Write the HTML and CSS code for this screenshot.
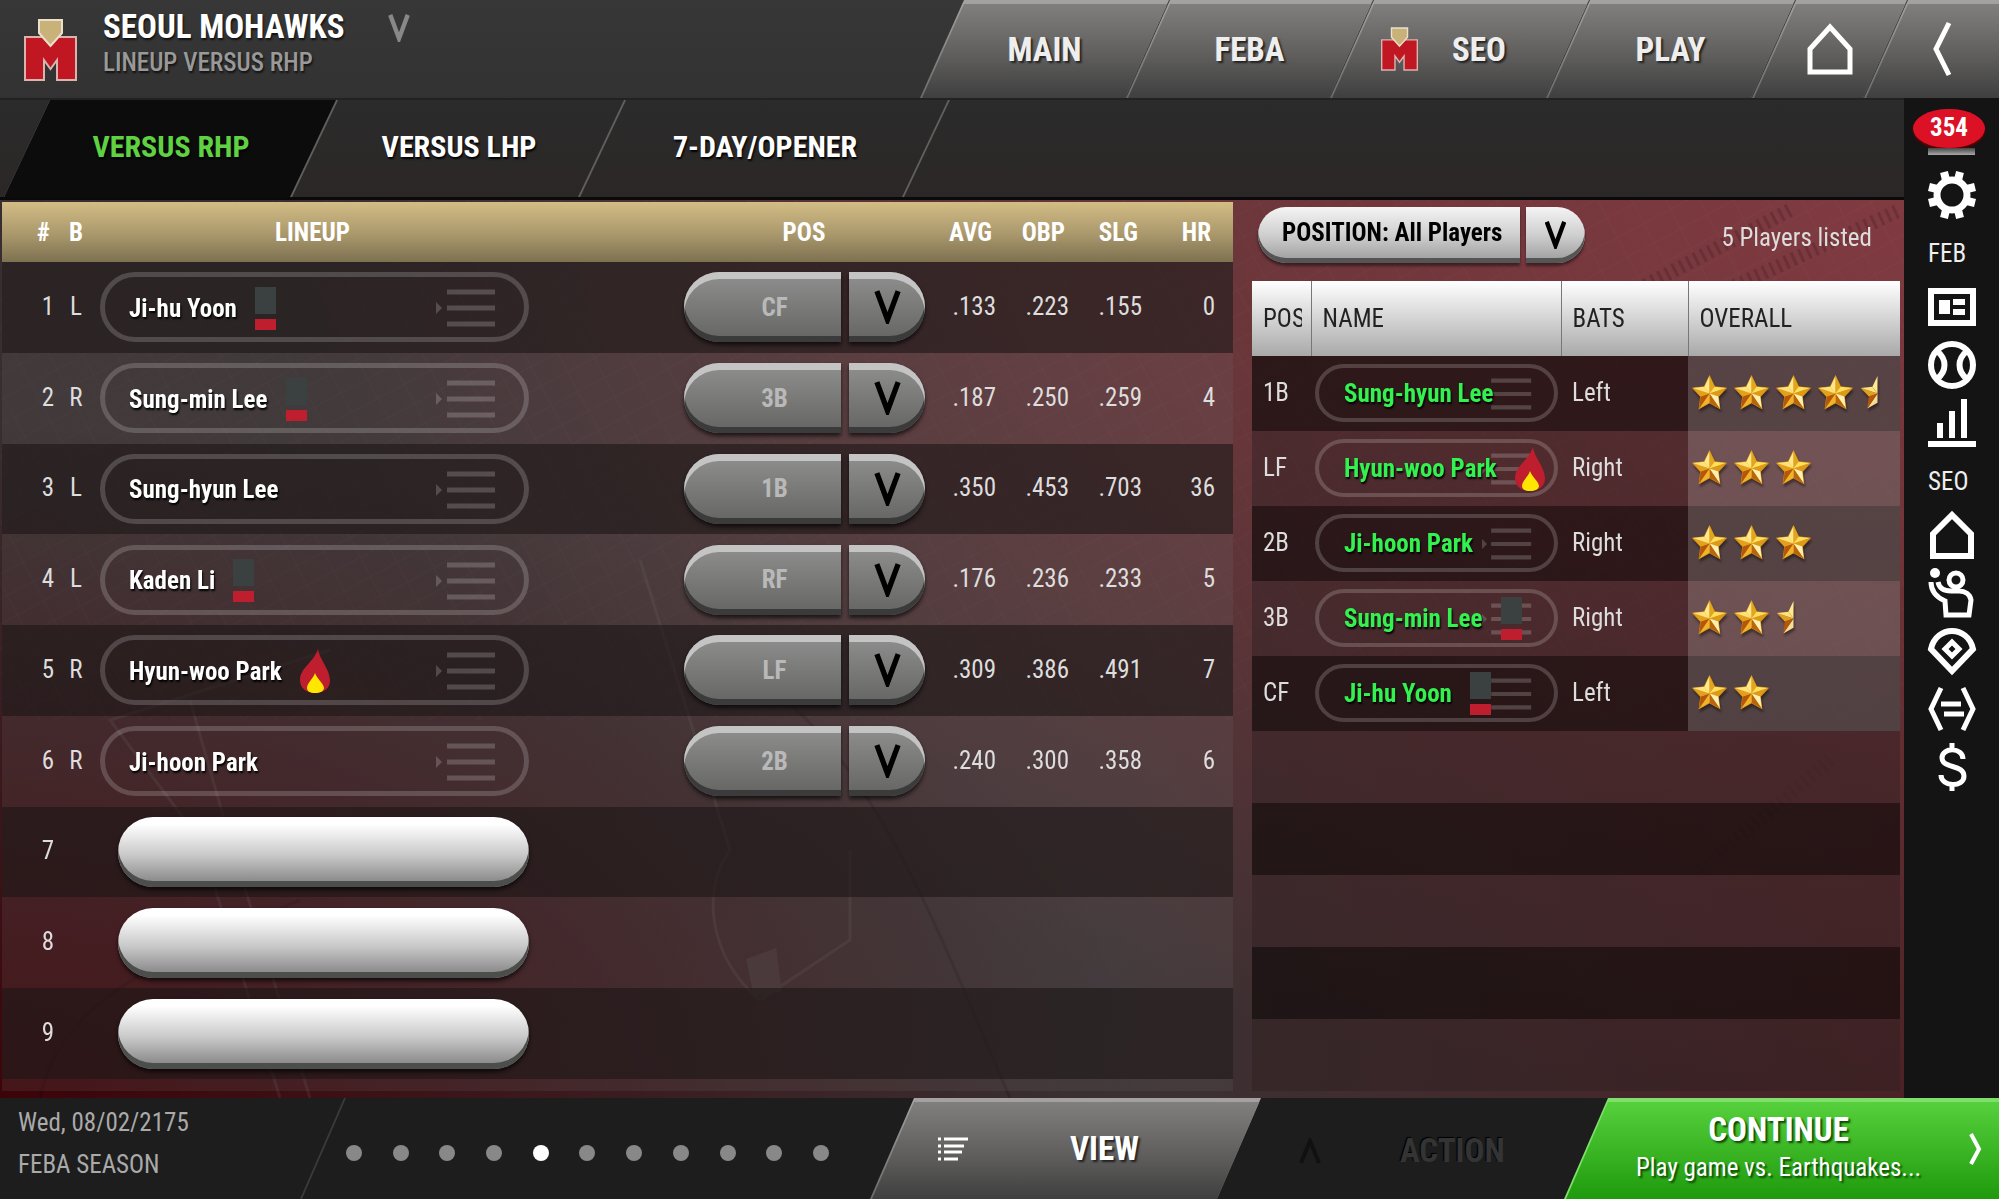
FILE: index.html
```html
<!DOCTYPE html>
<html lang="en">
<head>
<meta charset="UTF-8">
<title>Seoul Mohawks - Lineup versus RHP</title>
<link rel="stylesheet" href="styles.css">
</head>
<body>

<!-- shared icons -->
<svg class="symbols" aria-hidden="true">
  <symbol id="logo" viewBox="0 0 53 62">
    <path d="M1 18H52V61H33V41L26.500 50L20 41V61H1Z" fill="#c01722" stroke="#d9b3ae" stroke-width="2"/>
    <path d="M15 1H38V14L26.500 27L15 14Z" fill="#c9b27a" stroke="#eadfca" stroke-width="2"/>
  </symbol>
  <symbol id="chevron" viewBox="0 0 24 32">
    <path d="M2 1L12 28L22 1" fill="none" stroke="currentColor" stroke-width="5"/>
  </symbol>
  <symbol id="drag" viewBox="0 0 60 38">
    <path d="M0 13L6 19L0 25Z" fill="currentColor"/>
    <path d="M11 3H59M11 19H59M11 35H59" stroke="currentColor" stroke-width="5"/>
  </symbol>
  <symbol id="cold" viewBox="0 0 21 43">
    <rect width="21" height="27" fill="#3b4140"/>
    <rect y="32" width="21" height="11" fill="#be1e2d"/>
  </symbol>
  <symbol id="fire" viewBox="0 0 30 44">
    <path d="M18 0C19 10 30 20 30 32C30 39 24 44 15 44C6 44 0 39 0 31C0 19 14 13 18 0Z" fill="#be1e2d"/>
    <path d="M15 24C17 30 24 35 24 39C24 42 20 44 15 44C10 44 7 42 7 39C7 34 13 30 15 24Z" fill="#ffe600"/>
  </symbol>
  <symbol id="star" viewBox="0 0 34 34">
    <path d="M17 1L22 11.500L33.200 12.700L25.500 21L27 32.500L17 27L7 32.500L8.500 21L0.800 12.700L12 11.500Z" fill="#e0a01c" stroke="#c98a18" stroke-width="1"/>
    <path d="M17 18L17 1L12 11.500Z" fill="#ffe98a"/>
    <path d="M17 18L17 1L22 11.500Z" fill="#e3a51e"/>
    <path d="M17 18L33.200 12.700L22 11.500Z" fill="#ffdf5c"/>
    <path d="M17 18L33.200 12.700L25.500 21Z" fill="#dc9a18"/>
    <path d="M17 18L27 32.500L25.500 21Z" fill="#fff0b0"/>
    <path d="M17 18L27 32.500L17 27Z" fill="#b9640e"/>
    <path d="M17 18L7 32.500L17 27Z" fill="#f0b42a"/>
    <path d="M17 18L7 32.500L8.500 21Z" fill="#b5560b"/>
    <path d="M17 18L0.800 12.700L8.500 21Z" fill="#e2a01c"/>
    <path d="M17 18L0.800 12.700L12 11.500Z" fill="#ffe27a"/>
  </symbol>
  <symbol id="half-star" viewBox="0 0 34 34">
    <path d="M17 18L17 1L12 11.500Z" fill="#ffe98a"/>
    <path d="M17 18V27L7 32.500Z" fill="#f7dc96"/>
    <path d="M17 18L7 32.500L8.500 21Z" fill="#b5560b"/>
    <path d="M17 18L0.800 12.700L8.500 21Z" fill="#e2a01c"/>
    <path d="M17 18L0.800 12.700L12 11.500Z" fill="#ffe27a"/>
  </symbol>
</svg>

<div class="app">

  <header class="topbar">
    <svg class="team-logo"><use href="#logo"/></svg>
    <div class="team">
      <h1>SEOUL MOHAWKS</h1>
      <p>LINEUP VERSUS RHP</p>
    </div>
    <button class="team-switch" aria-label="Change page"><svg><use href="#chevron"/></svg></button>
    <nav class="main-nav">
      <a href="#main" class="slant">MAIN</a>
      <a href="#feba" class="slant nav-feba">FEBA</a>
      <a href="#seo" class="slant nav-team"><svg class="nav-logo"><use href="#logo"/></svg>SEO</a>
      <a href="#play" class="slant">PLAY</a>
      <a href="#home" class="slant nav-home" aria-label="Home">
        <svg width="46" height="54" viewBox="0 0 46 54" fill="none" stroke="#fff" stroke-width="5"><path d="M3 50V27L23 5L43 27V50Z"/></svg>
      </a>
      <a href="#back" class="slant nav-back" aria-label="Back">
        <svg width="20" height="56" viewBox="0 0 20 56" fill="none" stroke="#fff" stroke-width="5"><path d="M17 2L4 28L17 54"/></svg>
      </a>
    </nav>
  </header>

  <nav class="tabs">
    <a href="#rhp" class="tab active">VERSUS RHP</a>
    <a href="#lhp" class="tab">VERSUS LHP</a>
    <a href="#opener" class="tab wide">7-DAY/OPENER</a>
  </nav>

  <main class="content">
    <svg class="backdrop" viewBox="0 0 1904 898" preserveAspectRatio="none" aria-hidden="true">
      <defs>
        <pattern id="mesh" width="30" height="22" patternUnits="userSpaceOnUse" patternTransform="rotate(-28)">
          <path d="M0 0H30M0 0V22" stroke="#fff" fill="none"/>
        </pattern>
      </defs>
      <rect width="1904" height="520" fill="url(#mesh)" opacity=".04"/>
      <g fill="none" stroke="#777" stroke-width="3" opacity=".15">
        <path d="M640 360L690 520L730 650C700 690 710 760 760 800L850 740V650"/>
        <path d="M280 898L200 640L110 520L330 450"/>
        <path d="M310 898L230 640L190 500"/>
        <path d="M748 760L775 750L780 790L755 795Z" fill="#777"/>
        <path d="M700 450C860 500 940 740 1010 898" stroke="#000"/>
        <path d="M40 898C60 800 160 760 300 700" stroke="#000"/>
      </g>
      <g fill="none" stroke="#411c20" stroke-width="14" stroke-dasharray="3 5" opacity=".3">
        <path d="M1640 130L1900 10"/>
        <path d="M1560 130L1790 10"/>
        <path d="M1700 670L1830 560" opacity=".6"/>
      </g>
    </svg>

    <section class="lineup">
      <table class="lineup-table">
        <colgroup>
          <col class="col-num"><col class="col-bats"><col><col class="col-pos">
          <col class="col-avg"><col class="col-stat"><col class="col-stat"><col class="col-hr">
        </colgroup>
        <thead>
          <tr><th>#</th><th>B</th><th><div class="lineup-title">LINEUP</div></th><th>POS</th><th>AVG</th><th>OBP</th><th>SLG</th><th>HR</th></tr>
        </thead>
        <tbody>
          <tr>
            <td>1</td><td>L</td>
            <td><button class="slot"><span>Ji-hu Yoon</span><svg class="cold"><use href="#cold"/></svg><svg class="drag"><use href="#drag"/></svg></button></td>
            <td><div class="picker"><select aria-label="Position of Ji-hu Yoon"><option>CF</option></select><button aria-label="Open positions"><svg><use href="#chevron"/></svg></button></div></td>
            <td>.133</td><td>.223</td><td>.155</td><td>0</td>
          </tr>
          <tr>
            <td>2</td><td>R</td>
            <td><button class="slot"><span>Sung-min Lee</span><svg class="cold"><use href="#cold"/></svg><svg class="drag"><use href="#drag"/></svg></button></td>
            <td><div class="picker"><select aria-label="Position of Sung-min Lee"><option>3B</option></select><button aria-label="Open positions"><svg><use href="#chevron"/></svg></button></div></td>
            <td>.187</td><td>.250</td><td>.259</td><td>4</td>
          </tr>
          <tr>
            <td>3</td><td>L</td>
            <td><button class="slot"><span>Sung-hyun Lee</span><svg class="drag"><use href="#drag"/></svg></button></td>
            <td><div class="picker"><select aria-label="Position of Sung-hyun Lee"><option>1B</option></select><button aria-label="Open positions"><svg><use href="#chevron"/></svg></button></div></td>
            <td>.350</td><td>.453</td><td>.703</td><td>36</td>
          </tr>
          <tr>
            <td>4</td><td>L</td>
            <td><button class="slot"><span>Kaden Li</span><svg class="cold"><use href="#cold"/></svg><svg class="drag"><use href="#drag"/></svg></button></td>
            <td><div class="picker"><select aria-label="Position of Kaden Li"><option>RF</option></select><button aria-label="Open positions"><svg><use href="#chevron"/></svg></button></div></td>
            <td>.176</td><td>.236</td><td>.233</td><td>5</td>
          </tr>
          <tr>
            <td>5</td><td>R</td>
            <td><button class="slot"><span>Hyun-woo Park</span><svg class="fire"><use href="#fire"/></svg><svg class="drag"><use href="#drag"/></svg></button></td>
            <td><div class="picker"><select aria-label="Position of Hyun-woo Park"><option>LF</option></select><button aria-label="Open positions"><svg><use href="#chevron"/></svg></button></div></td>
            <td>.309</td><td>.386</td><td>.491</td><td>7</td>
          </tr>
          <tr>
            <td>6</td><td>R</td>
            <td><button class="slot"><span>Ji-hoon Park</span><svg class="drag"><use href="#drag"/></svg></button></td>
            <td><div class="picker"><select aria-label="Position of Ji-hoon Park"><option>2B</option></select><button aria-label="Open positions"><svg><use href="#chevron"/></svg></button></div></td>
            <td>.240</td><td>.300</td><td>.358</td><td>6</td>
          </tr>
          <tr><td>7</td><td></td><td><button class="slot-empty" aria-label="Empty slot 7"></button></td><td></td><td></td><td></td><td></td><td></td></tr>
          <tr><td>8</td><td></td><td><button class="slot-empty" aria-label="Empty slot 8"></button></td><td></td><td></td><td></td><td></td><td></td></tr>
          <tr><td>9</td><td></td><td><button class="slot-empty" aria-label="Empty slot 9"></button></td><td></td><td></td><td></td><td></td><td></td></tr>
        </tbody>
      </table>
      <div class="lineup-end"></div>
    </section>

    <section class="roster">
      <div class="toolbar">
        <div class="filter">
          <select aria-label="Position filter"><option>POSITION: All Players</option></select>
          <button aria-label="Open filter"><svg><use href="#chevron"/></svg></button>
        </div>
        <span class="count">5 Players listed</span>
      </div>
      <table class="roster-table">
        <colgroup><col class="col-rpos"><col class="col-name"><col class="col-rbats"><col></colgroup>
        <thead>
          <tr><th><div class="clip">POS</div></th><th>NAME</th><th>BATS</th><th>OVERALL</th></tr>
        </thead>
        <tbody>
          <tr class="player">
            <td>1B</td>
            <td><button class="slot small"><svg class="drag"><use href="#drag"/></svg><span>Sung-hyun Lee</span></button></td>
            <td>Left</td>
            <td><div class="stars"><svg><use href="#star"/></svg><svg><use href="#star"/></svg><svg><use href="#star"/></svg><svg><use href="#star"/></svg><svg><use href="#half-star"/></svg></div></td>
          </tr>
          <tr class="player">
            <td>LF</td>
            <td><button class="slot small"><svg class="drag"><use href="#drag"/></svg><span>Hyun-woo Park</span><svg class="fire"><use href="#fire"/></svg></button></td>
            <td>Right</td>
            <td><div class="stars"><svg><use href="#star"/></svg><svg><use href="#star"/></svg><svg><use href="#star"/></svg></div></td>
          </tr>
          <tr class="player">
            <td>2B</td>
            <td><button class="slot small"><svg class="drag"><use href="#drag"/></svg><span>Ji-hoon Park</span></button></td>
            <td>Right</td>
            <td><div class="stars"><svg><use href="#star"/></svg><svg><use href="#star"/></svg><svg><use href="#star"/></svg></div></td>
          </tr>
          <tr class="player">
            <td>3B</td>
            <td><button class="slot small"><svg class="drag"><use href="#drag"/></svg><span>Sung-min Lee</span><svg class="cold"><use href="#cold"/></svg></button></td>
            <td>Right</td>
            <td><div class="stars"><svg><use href="#star"/></svg><svg><use href="#star"/></svg><svg><use href="#half-star"/></svg></div></td>
          </tr>
          <tr class="player">
            <td>CF</td>
            <td><button class="slot small"><svg class="drag"><use href="#drag"/></svg><span>Ji-hu Yoon</span><svg class="cold"><use href="#cold"/></svg></button></td>
            <td>Left</td>
            <td><div class="stars"><svg><use href="#star"/></svg><svg><use href="#star"/></svg></div></td>
          </tr>
          <tr class="blank"><td colspan="4"></td></tr>
          <tr class="blank"><td colspan="4"></td></tr>
          <tr class="blank"><td colspan="4"></td></tr>
          <tr class="blank"><td colspan="4"></td></tr>
          <tr class="blank"><td colspan="4"></td></tr>
        </tbody>
      </table>
    </section>
  </main>

  <aside class="sidebar">
    <a href="#inbox" class="inbox"><span class="badge">354</span></a>
    <a href="#settings" aria-label="Settings">
      <svg viewBox="0 0 48 48"><circle cx="24" cy="24" r="15" stroke-width="7"/><g stroke-width="8"><path d="M16 1L18 9M32 1L30 9M16 47L18 39M32 47L30 39M1 16L9 18M1 32L9 30M47 16L39 18M47 32L39 30"/></g></svg>
    </a>
    <span class="side-label">FEB</span>
    <a href="#news" aria-label="News">
      <svg viewBox="0 0 48 48"><path d="M3 8H45V40H3Z"/><path d="M11 17H22V31H11Z" fill="#fff" stroke="none"/><path d="M25 19H37M25 29H37"/></svg>
    </a>
    <a href="#scores" aria-label="Scores">
      <svg viewBox="0 0 48 48"><circle cx="24" cy="24" r="21"/><path d="M9 10C19 18 19 30 9 38M39 10C29 18 29 30 39 38"/></svg>
    </a>
    <a href="#stats" aria-label="Stats">
      <svg viewBox="0 0 48 48"><path d="M0 45H48M12 39V24M24 39V12M36 39V0"/></svg>
    </a>
    <span class="side-label">SEO</span>
    <a href="#clubhouse" aria-label="Clubhouse">
      <svg viewBox="0 0 48 48"><path d="M5 45V23L24 4L43 23V45Z"/></svg>
    </a>
    <a href="#roster" aria-label="Roster">
      <svg viewBox="0 0 48 48"><circle cx="28" cy="11" r="7" stroke-width="5"/><circle cx="7" cy="4" r="5" fill="#fff" stroke="none"/><path d="M3 13C3 22 8 28 17 32L18 46H41L43 31C42 25 37 22 31 22H23C15 22 11 18 10 13" stroke-width="5"/></svg>
    </a>
    <a href="#depth" aria-label="Depth chart">
      <svg viewBox="0 0 48 48"><path d="M3 22C8 -2 40 -2 45 22L24 44Z"/><path d="M24 15L31 22L24 29L17 22Z" stroke-width="5"/></svg>
    </a>
    <a href="#trades" aria-label="Trades">
      <svg viewBox="0 0 48 48" class="thin"><path d="M13 3L3 24L13 45M35 3L45 24L35 45M13 19H33M16 29H36"/></svg>
    </a>
    <a href="#finances" aria-label="Finances">
      <svg viewBox="0 0 48 48" class="thin"><path d="M35 16C35 4 14 4 14 15C14 26 36 21 36 33C36 45 13 44 13 32M24 0V8M24 40V48"/></svg>
    </a>
  </aside>

  <footer class="bottombar">
    <div class="date"><p>Wed, 08/02/2175</p><p>FEBA SEASON</p></div>
    <div class="pager">
      <i></i><i></i><i></i><i></i><i class="on"></i><i></i><i></i><i></i><i></i><i></i><i></i>
    </div>
    <button class="slant view">
      <svg width="30" height="24" viewBox="0 0 30 24" stroke="#fff" stroke-width="3"><path d="M0 2H3M6 2H30M0 9H3M6 9H26M0 15H3M6 15H24M0 22H3M6 22H20"/></svg>
      VIEW
    </button>
    <button class="action" disabled>
      <svg width="24" height="26" viewBox="0 0 24 26" fill="none" stroke="#111" stroke-width="4"><path d="M3 25L12 3L21 25"/></svg>
      ACTION
    </button>
    <button class="slant continue">
      <span class="continue-text"><strong>CONTINUE</strong><span>Play game vs. Earthquakes...</span></span>
      <svg width="14" height="34" viewBox="0 0 14 34" fill="none" stroke="#fff" stroke-width="4"><path d="M2 2L10 17L2 32"/></svg>
    </button>
  </footer>

</div>

</body>
</html>
```
FILE: styles.css
```css
* {
  box-sizing: border-box;
}

body {
  margin: 0;
  background: #141414;
  color: #ddd;
  font-family: "Roboto Condensed", "Roboto", sans-serif;
  font-size: 25px;
}

h1, p {
  margin: 0;
}

a {
  color: inherit;
  text-decoration: none;
}

button, select {
  font: inherit;
  color: inherit;
  border: 0;
  margin: 0;
  padding: 0;
  background: none;
  appearance: none;
  cursor: pointer;
}

svg {
  display: block;
  flex: none;
}

.symbols {
  position: absolute;
  width: 0;
  height: 0;
}

.app {
  display: grid;
  grid-template-columns: minmax(0, 1fr) 95px;
  grid-template-rows: 98px 102px 1fr 101px;
  min-height: 100vh;
}

/* top bar */
.topbar {
  grid-column: 1 / -1;
  display: flex;
  background: linear-gradient(#373737, #323232);
}

.team-logo {
  width: 53px;
  height: 62px;
  margin: 19px 0 0 24px;
}

.team {
  padding: 7px 0 0 26px;
  text-shadow: 1px 2px 2px #111;
}

.team h1 {
  font-size: 33px;
  line-height: 40px;
  color: #fff;
}

.team p {
  line-height: 32px;
  font-weight: 500;
  color: #999;
}

.team-switch {
  align-self: flex-start;
  margin: 14px 0 0 42px;
  color: #888;
}

.team-switch svg {
  width: 24px;
  height: 28px;
}

.main-nav {
  display: flex;
  margin-left: auto;
  font-size: 33px;
  font-weight: 700;
  color: #eee;
  text-shadow: 2px 2px 2px #222;
}

/* slanted buttons: light edge behind, gradient face in front */
.slant {
  position: relative;
  isolation: isolate;
  display: flex;
  align-items: center;
  justify-content: center;
  background: linear-gradient(#a5a3a1, #6a6a6a);
  clip-path: polygon(44px 0, 100% 0, calc(100% - 44px) 100%, 0 100%);
}

.slant::before {
  content: "";
  position: absolute;
  inset: 4px 0 0 1px;
  z-index: -1;
  background: linear-gradient(#817f7d, #5f5e5d 55%, #3f3f3f);
  clip-path: polygon(43px 0, 100% 0, calc(100% - 44px) 100%, 1px 100%);
}

.main-nav .slant {
  width: 249px;
  margin-left: -43px;
}

.main-nav .nav-feba {
  width: 247px;
}

.main-nav .nav-team {
  width: 259px;
  padding-right: 32px;
  gap: 34px;
}

.nav-logo {
  width: 37px;
  height: 44px;
}

.main-nav .nav-home {
  width: 155px;
}

.main-nav .nav-back {
  width: 135px;
  padding-left: 20px;
  clip-path: polygon(44px 0, 100% 0, 100% 100%, 0 100%);
}

.nav-back::before {
  clip-path: polygon(43px 0, 100% 0, 100% 100%, 1px 100%);
}

/* tabs */
.tabs {
  display: flex;
  padding-left: 4px;
  background: linear-gradient(#2b2b2b, #2b2726);
  border-top: 2px solid #222;
  border-bottom: 3px solid #0a0a0a;
}

.tab {
  position: relative;
  isolation: isolate;
  display: flex;
  align-items: center;
  justify-content: center;
  width: 334px;
  margin-right: -46px;
  padding-bottom: 5px;
  font-size: 30px;
  font-weight: 700;
  color: #fff;
  text-shadow: 1px 2px 2px #000;
  background: #60605f;
  clip-path: polygon(46px 0, 100% 0, calc(100% - 46px) 100%, 0 100%);
}

.tab::before {
  content: "";
  position: absolute;
  inset: 0;
  z-index: -1;
  background: linear-gradient(#2b2b2b, #2b2726);
  clip-path: polygon(46px 0, calc(100% - 2px) 0, calc(100% - 48px) 100%, 0 100%);
}

.tab.active {
  color: #5fd143;
}

.tab.active::before {
  background: #0c0c0c;
}

.tab.wide {
  width: 370px;
}

/* main area */
.content {
  position: relative;
  isolation: isolate;
  display: grid;
  grid-template-columns: 1231fr 648fr;
  gap: 19px;
  padding: 2px 4px 7px 2px;
  background:
    radial-gradient(ellipse 85% 100% at 100% 0, #803b41, #7a383dcc 40%, #803b4100),
    radial-gradient(ellipse 60% 75% at 0 100%, #3c0409, #3c040900),
    linear-gradient(100deg, #382e30, #3a3234 60%, #4a2225);
}

.backdrop {
  position: absolute;
  inset: 0;
  z-index: -1;
  width: 100%;
  height: 100%;
}

table {
  width: 100%;
  border-collapse: collapse;
  table-layout: fixed;
}

th, td {
  padding: 0;
}

td {
  padding-bottom: 2px;
}

td:nth-child(3):has(button),
td:has(.picker) {
  padding-bottom: 0;
}

.lineup-table {
  height: calc(100vh - 322px);
}

.lineup-table thead tr {
  height: 60px;
  background: linear-gradient(#d3bd85, #a9976c 55%, #7d7150);
}

.lineup-table th {
  color: #fff;
}

.lineup-table td {
  text-align: right;
}

.lineup-table tbody tr:nth-child(odd) {
  background: #241e1ea8;
}

.lineup-table tbody tr:nth-child(even) {
  background: #78787826;
}

.lineup-table td:nth-child(2) {
  text-align: center;
}

.col-num { width: 52px; }
.col-bats { width: 44px; }
.col-pos { width: 244px; }
.col-avg { width: 70px; }
.col-stat { width: 73px; }
.col-hr { width: 91px; }

.lineup-table th:nth-child(1),
.lineup-table th:nth-child(n+5) {
  text-align: right;
  padding-right: 4px;
}

.lineup-table th:nth-child(8) {
  padding-right: 22px;
}

.lineup-table td:nth-child(8) {
  padding-right: 18px;
}

.lineup-title {
  width: 429px;
}

.lineup-end {
  height: 12px;
  background: #78787826;
}

.slot {
  position: relative;
  display: flex;
  align-items: center;
  gap: 18px;
  width: 429px;
  height: 70px;
  padding: 2px 0 0 24px;
  border: 5px solid #ffffff2e;
  border-radius: 35px;
  font-weight: 700;
  color: #fff;
  text-shadow: 1px 2px 2px #000;
}

.lineup .slot {
  margin-left: 2px;
}

.cold {
  width: 21px;
  height: 43px;
}

.fire {
  width: 30px;
  height: 44px;
}

.drag {
  position: absolute;
  right: 28px;
  width: 60px;
  height: 38px;
  color: #ffffff30;
}

.slot-empty {
  display: block;
  width: 411px;
  height: 70px;
  margin-left: 20px;
  border-radius: 35px;
  background: linear-gradient(#fff 10%, #c8c8c8 55%, #8e8e8e 90%);
  box-shadow: inset 0 -6px 0 #4c4e4c, 0 3px 4px #000a;
}

.picker {
  display: flex;
  gap: 8px;
  margin-left: 2px;
}

.picker select,
.picker button {
  height: 70px;
  background: linear-gradient(#8f908f, #646462);
  box-shadow: inset 0 7px 0 #c4c4c4, inset 0 -6px 0 #3a3b3a, 0 3px 4px #000a;
}

.picker select {
  width: 157px;
  padding-left: 24px;
  border-radius: 35px 0 0 35px;
  text-align-last: center;
  font-weight: 700;
  color: #b9b9b9;
}

.picker button {
  width: 76px;
  border-radius: 0 35px 35px 0;
  color: #000;
}

.picker svg,
.filter svg {
  width: 27px;
  height: 34px;
  margin: 0 auto;
}

/* roster */
.toolbar {
  display: flex;
  align-items: flex-start;
  justify-content: space-between;
  height: 79px;
  padding: 5px 28px 0 6px;
}

.filter {
  display: flex;
  gap: 6px;
}

.filter select,
.filter button {
  height: 56px;
  background: linear-gradient(#f4f4f4, #cfcfcf 50%, #9a9a9a);
  box-shadow: inset 0 -5px 0 #555, 0 3px 3px #0007;
  color: #000;
}

.filter select {
  width: 262px;
  padding: 0 0 6px 24px;
  border-radius: 28px 0 0 28px;
  font-weight: 700;
}

.filter button {
  width: 59px;
  border-radius: 0 28px 28px 0;
}

.filter svg {
  width: 21px;
  height: 28px;
}

.count {
  padding-top: 16px;
  line-height: 30px;
}

.roster-table thead tr {
  height: 75px;
  background: linear-gradient(#fff, #a9a9a9);
}

.roster-table th {
  padding-left: 11px;
  text-align: left;
  font-weight: 400;
  color: #222;
}

.roster-table th + th {
  border-left: 1px solid #777;
}

.roster-table tbody tr:nth-child(odd) {
  background: #120c0cb3;
}

.roster-table tbody tr:nth-child(even) {
  background: #30202280;
}

.roster-table tbody .blank:nth-child(odd) {
  background: #120c0cb3;
}

.clip {
  width: 39px;
  overflow: hidden;
}

.col-rpos { width: 59px; }
.col-name { width: 250px; }
.col-rbats { width: 127px; }

.roster-table td {
  padding-left: 11px;
}

.player {
  height: 75px;
}

.blank {
  height: 72px;
}

.player td:nth-child(2) {
  padding-left: 4px;
}

.player td:nth-child(4) {
  padding-left: 4px;
  background: #ffffff30;
}

.slot.small {
  width: 243px;
  height: 58px;
  padding-left: 25px;
  border-width: 4px;
  border-radius: 29px;
  color: #33f24f;
  white-space: nowrap;
}

.slot.small span,
.slot.small .cold,
.slot.small .fire {
  position: relative;
}

.slot.small .drag {
  right: 22px;
  width: 50px;
  height: 32px;
}

.stars {
  display: flex;
  gap: 7px;
}

.stars svg {
  width: 35px;
  height: 35px;
  filter: drop-shadow(1px 3px 1px #0006);
}

/* sidebar */
.sidebar {
  grid-column: 2;
  grid-row: 2 / 4;
  display: flex;
  flex-direction: column;
  background: #141414;
  color: #eee;
}

.sidebar a {
  display: flex;
  align-items: center;
  height: 58px;
  padding-left: 24px;
}

.sidebar a svg {
  width: 48px;
  height: 48px;
  fill: none;
  stroke: #fff;
  stroke-width: 6px;
  overflow: visible;
}

.sidebar a .thin {
  stroke-width: 5px;
}

.sidebar .inbox {
  flex-direction: column;
  align-items: flex-start;
  height: 68px;
  padding: 11px 0 0 9px;
}

.inbox::after {
  content: "";
  width: 47px;
  height: 7px;
  margin-left: 15px;
  background: linear-gradient(#444, #aaa);
}

.badge {
  width: 72px;
  height: 39px;
  border-radius: 36px / 20px;
  background: #dd1126;
  color: #fff;
  font-weight: 700;
  line-height: 38px;
  text-align: center;
  box-shadow: 0 2px 2px #600;
}

.side-label {
  height: 54px;
  padding: 15px 0 0 24px;
  line-height: 30px;
}

/* bottom bar */
.bottombar {
  grid-column: 1 / -1;
  display: flex;
  background: #1d1d1d;
  color: #aaa;
}

.date {
  position: relative;
  width: 346px;
  padding: 4px 0 0 18px;
  line-height: 42px;
}

.date::after {
  content: "";
  position: absolute;
  inset: 0 0 0 auto;
  width: 46px;
  background: #3a3a3a;
  clip-path: polygon(44px 0, 46px 0, 2px 100%, 0 100%);
}

.pager {
  display: flex;
  align-items: center;
  justify-content: space-between;
  width: 483px;
  padding-top: 8px;
}

.pager i {
  width: 16px;
  height: 16px;
  border-radius: 50%;
  background: #888;
}

.pager .on {
  background: #fff;
}

.view {
  width: 391px;
  margin-left: auto;
  gap: 102px;
  padding-right: 54px;
  font-size: 33px;
  font-weight: 700;
  color: #fff;
  text-shadow: 2px 2px 2px #222;
}

.action {
  display: flex;
  align-items: center;
  gap: 78px;
  width: 303px;
  padding: 4px 0 0 37px;
  font-size: 33px;
  font-weight: 700;
  color: #343434;
  text-shadow: -1px -1px 1px #000;
}

.continue {
  width: 435px;
  padding-left: 72px;
  justify-content: space-between;
  padding-right: 16px;
  color: #fff;
  background: #7ee06a;
  clip-path: polygon(44px 0, 100% 0, 100% 100%, 0 100%);
}

.continue::before {
  background: linear-gradient(#56d03c, #1f9a0c);
  clip-path: polygon(43px 0, 100% 0, 100% 100%, 1px 100%);
}

.continue-text {
  display: flex;
  flex-direction: column;
  text-align: center;
  line-height: 38px;
  text-shadow: 2px 2px 2px #0a4a04;
}

.continue-text strong {
  font-size: 33px;
}
```
